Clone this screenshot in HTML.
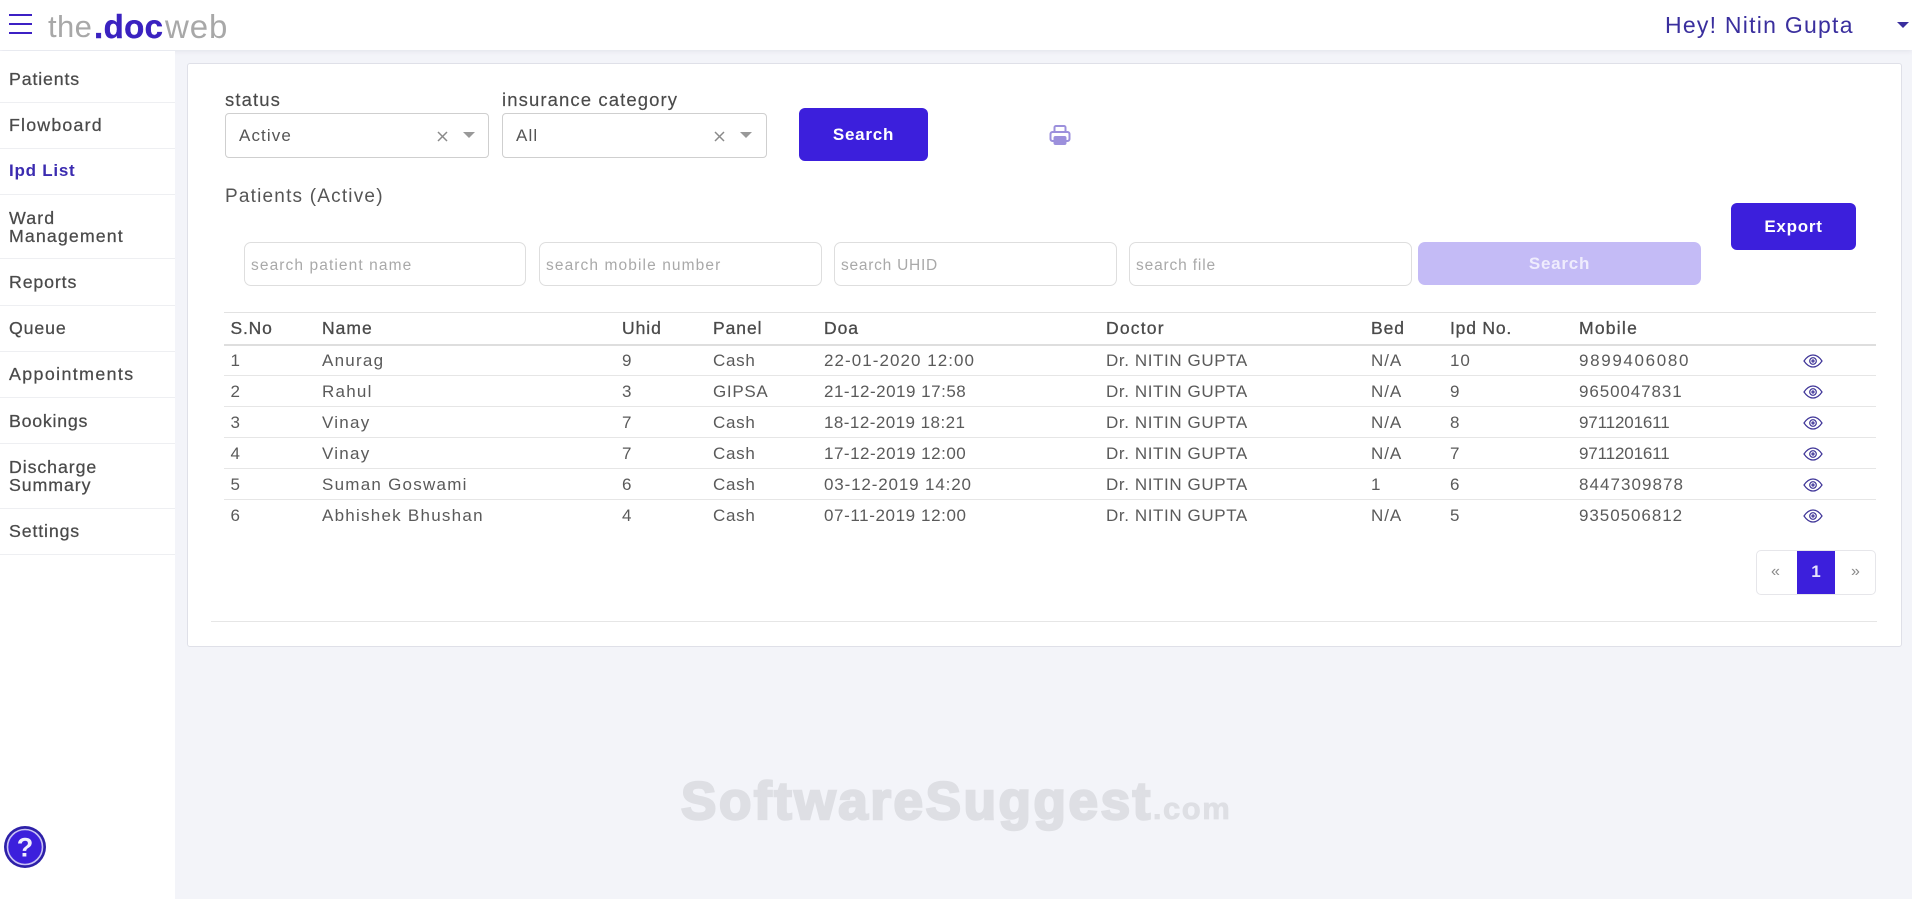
<!DOCTYPE html>
<html lang="en">
<head>
<meta charset="utf-8">
<title>the.docweb - Ipd List</title>
<style>
*{box-sizing:border-box}
html,body{margin:0;padding:0;width:1912px;height:899px;overflow:hidden;background:#f3f4f9;font-family:"Liberation Sans",sans-serif;color:#555}
.a{position:absolute;white-space:nowrap}
#top{left:0;top:0;width:1912px;height:50px;background:#fff;box-shadow:0 1px 5px rgba(60,60,90,.09)}
.ham{left:9px;height:2px;width:23px;background:#3c20c4}
#side{left:0;top:51px;width:175px;height:848px;background:#fff}
.nav{left:9px;font-size:17.800px;letter-spacing:.85px;line-height:18px;color:#4a4a4a;-webkit-text-stroke:.25px #4a4a4a}
.sep{left:0;width:175px;height:1px;background:#eeeff2}
#card{left:187px;top:63px;height:584px;width:1715px;background:#fff;border:1px solid #dfe0e8;border-radius:3px}
.lbl{font-size:18.500px;letter-spacing:1.1px;color:#4a4a4a;line-height:20px;-webkit-text-stroke:.15px #4a4a4a}
.sel{height:45px;top:113px;border:1px solid #cfcfcf;border-radius:4px;background:#fff}
.sel span{position:absolute;left:13px;top:12px;font-size:17px;letter-spacing:1.1px;line-height:20px;color:#555}
.inp{top:242px;height:44px;width:283px;border:1px solid #dedede;border-radius:7px;background:#fff;font-size:15.500px;letter-spacing:1.1px;line-height:45px;padding-left:6px;color:#a9a9a9}
.btn{background:#3c1fdc;color:#fff;font-weight:bold;font-size:17px;letter-spacing:.75px;text-align:center;border-radius:6px}
table{position:absolute;left:224px;top:312px;width:1652px;border-collapse:collapse;table-layout:fixed;font-size:17px;letter-spacing:.95px;color:#5a5a5a}
th,td{padding:0 0 0 6.5px;text-align:left;white-space:nowrap;overflow:visible}
th{height:32px;font-weight:normal;font-size:17.500px;padding-top:1px;color:#4a4a4a;-webkit-text-stroke:.3px #4a4a4a;border-top:1px solid #e2e2e2;border-bottom:2px solid #dedede}
td{height:31px;border-bottom:1px solid #e6e6e6;padding-top:1px}
tr:last-child td{border-bottom:none}
td svg{display:block;margin-left:-9px;margin-top:1px}
td.n{letter-spacing:1.25px}
td.p{letter-spacing:.7px}
td.o{letter-spacing:.6px}
.pg{left:1756px;top:550px;width:120px;height:45px;border:1px solid #e6e6ea;border-radius:5px;background:#fff}
</style>
</head>
<body>
<div class="a" id="top"></div>
<div class="a ham" style="top:14px"></div>
<div class="a ham" style="top:23px"></div>
<div class="a ham" style="top:31.500px"></div>
<div class="a" style="left:48px;top:9px;font-size:31px;line-height:36px;color:#a8a8a8;letter-spacing:.4px">the</div>
<div class="a" style="left:94px;top:9px;font-size:33px;line-height:36px;color:#3a22c0;font-weight:bold;letter-spacing:.4px;-webkit-text-stroke:.4px #3a22c0">.doc</div>
<div class="a" style="left:165px;top:9px;font-size:33px;line-height:36px;color:#a8a8a8;letter-spacing:.9px">web</div>
<div class="a" style="left:1665px;top:11px;font-size:23px;line-height:28px;color:#3a2f9e;letter-spacing:1.25px">Hey! Nitin Gupta</div>
<div class="a" style="left:1897px;top:22px;width:0;height:0;border-left:6px solid transparent;border-right:6px solid transparent;border-top:6px solid #3a2f9e"></div>

<div class="a" id="side"></div>
<div class="a nav" style="top:70px">Patients</div><div class="a sep" style="top:102px"></div>
<div class="a nav" style="top:116px;letter-spacing:1.2px">Flowboard</div><div class="a sep" style="top:148px"></div>
<div class="a nav" style="top:162px;color:#3b2bb0;font-weight:bold;font-size:17px;-webkit-text-stroke:0;letter-spacing:.75px">Ipd List</div><div class="a sep" style="top:194px"></div>
<div class="a nav" style="top:209px;letter-spacing:1.1px">Ward<br>Management</div><div class="a sep" style="top:258px"></div>
<div class="a nav" style="top:273px">Reports</div><div class="a sep" style="top:305px"></div>
<div class="a nav" style="top:319px">Queue</div><div class="a sep" style="top:351px"></div>
<div class="a nav" style="top:365px;letter-spacing:1.4px">Appointments</div><div class="a sep" style="top:397px"></div>
<div class="a nav" style="top:412px;letter-spacing:.75px">Bookings</div><div class="a sep" style="top:443px"></div>
<div class="a nav" style="top:458px;letter-spacing:.9px">Discharge<br>Summary</div><div class="a sep" style="top:508px"></div>
<div class="a nav" style="top:522px">Settings</div><div class="a sep" style="top:554px"></div>

<svg class="a" style="left:3px;top:825px" width="44" height="44" viewBox="0 0 44 44">
<circle cx="22" cy="22" r="21" fill="#2d20a8"/><circle cx="22" cy="22" r="17.5" fill="#3c1fdc" stroke="#c9c2f5" stroke-width="1.6"/>
<text x="22" y="31.500" text-anchor="middle" font-family="Liberation Sans" font-weight="bold" font-size="27" fill="#f0eefd">?</text></svg>

<div class="a" id="card"></div>
<div class="a lbl" style="left:225px;top:90px">status</div>
<div class="a lbl" style="left:502px;top:90px">insurance category</div>

<div class="a sel" style="left:225px;width:264px"><span>Active</span></div>
<svg class="a" style="left:436px;top:130px" width="13" height="13" viewBox="0 0 13 13"><path d="M2 2L11 11M11 2L2 11" stroke="#8a8a8a" stroke-width="1.5"/></svg>
<div class="a" style="left:463px;top:132px;border-left:6.5px solid transparent;border-right:6.5px solid transparent;border-top:6.5px solid #999"></div>

<div class="a sel" style="left:502px;width:265px"><span>All</span></div>
<svg class="a" style="left:713px;top:130px" width="13" height="13" viewBox="0 0 13 13"><path d="M2 2L11 11M11 2L2 11" stroke="#8a8a8a" stroke-width="1.5"/></svg>
<div class="a" style="left:740px;top:132px;border-left:6.5px solid transparent;border-right:6.5px solid transparent;border-top:6.5px solid #999"></div>

<div class="a btn" style="left:799px;top:108px;width:129px;height:53px;line-height:54px">Search</div>

<svg class="a" style="left:1049px;top:124px" width="22" height="22" viewBox="0 0 22 22" fill="none" stroke="#9c90dc" stroke-width="2">
<path d="M5.5 8V3.5a1.5 1.5 0 0 1 1.5-1.5h8a1.5 1.5 0 0 1 1.5 1.5V8"/>
<path d="M5.5 17H3.5a2 2 0 0 1-2-2v-5a2 2 0 0 1 2-2h15a2 2 0 0 1 2 2v5a2 2 0 0 1-2 2h-2"/>
<rect x="5.5" y="13" width="11" height="7" rx="1" fill="#9c90dc"/></svg>

<div class="a" style="left:225px;top:186px;font-size:19px;letter-spacing:1.2px;line-height:22px;color:#555">Patients (Active)</div>

<div class="a inp" style="left:244px;width:282px">search patient name</div>
<div class="a inp" style="left:539px">search mobile number</div>
<div class="a inp" style="left:834px;letter-spacing:.75px">search UHID</div>
<div class="a inp" style="left:1129px;letter-spacing:.85px">search file</div>
<div class="a btn" style="left:1418px;top:242px;width:283px;height:43px;line-height:43px;background:#c4bbf6;border-radius:7px;color:#efecfd">Search</div>
<div class="a btn" style="left:1731px;top:203px;width:125px;height:47px;line-height:48px">Export</div>

<table>
<colgroup><col style="width:91.5px"><col style="width:300px"><col style="width:91px"><col style="width:111px"><col style="width:282px"><col style="width:265px"><col style="width:79px"><col style="width:129px"><col style="width:233px"><col></colgroup>
<thead><tr><th style="letter-spacing:.8px">S.No</th><th style="letter-spacing:1px">Name</th><th>Uhid</th><th>Panel</th><th>Doa</th><th style="letter-spacing:1.2px">Doctor</th><th>Bed</th><th style="letter-spacing:.8px">Ipd No.</th><th style="letter-spacing:1.25px">Mobile</th><th></th></tr></thead>
<tbody>
<tr><td>1</td><td class="n">Anurag</td><td>9</td><td class="p">Cash</td><td style="letter-spacing:1.05px">22-01-2020 12:00</td><td class="o">Dr. NITIN GUPTA</td><td>N/A</td><td>10</td><td style="letter-spacing:1.65px">9899406080</td><td><svg width="20" height="14" viewBox="0 0 20 14" fill="none" stroke="#3f3598" stroke-width="1.2"><path d="M1 7C4 2.5 7 1 10 1s6 1.5 9 6c-3 4.5-6 6-9 6S4 11.500 1 7z"/><circle cx="10" cy="7" r="3.300"/><circle cx="10" cy="7" r="1"/></svg></td></tr>
<tr><td>2</td><td class="n">Rahul</td><td>3</td><td class="p">GIPSA</td><td style="letter-spacing:.5px">21-12-2019 17:58</td><td class="o">Dr. NITIN GUPTA</td><td>N/A</td><td>9</td><td style="letter-spacing:.9px">9650047831</td><td><svg width="20" height="14" viewBox="0 0 20 14" fill="none" stroke="#3f3598" stroke-width="1.2"><path d="M1 7C4 2.5 7 1 10 1s6 1.5 9 6c-3 4.5-6 6-9 6S4 11.500 1 7z"/><circle cx="10" cy="7" r="3.300"/><circle cx="10" cy="7" r="1"/></svg></td></tr>
<tr><td>3</td><td class="n">Vinay</td><td>7</td><td class="p">Cash</td><td style="letter-spacing:.45px">18-12-2019 18:21</td><td class="o">Dr. NITIN GUPTA</td><td>N/A</td><td>8</td><td style="letter-spacing:-.15px">9711201611</td><td><svg width="20" height="14" viewBox="0 0 20 14" fill="none" stroke="#3f3598" stroke-width="1.2"><path d="M1 7C4 2.5 7 1 10 1s6 1.5 9 6c-3 4.5-6 6-9 6S4 11.500 1 7z"/><circle cx="10" cy="7" r="3.300"/><circle cx="10" cy="7" r="1"/></svg></td></tr>
<tr><td>4</td><td class="n">Vinay</td><td>7</td><td class="p">Cash</td><td style="letter-spacing:.5px">17-12-2019 12:00</td><td class="o">Dr. NITIN GUPTA</td><td>N/A</td><td>7</td><td style="letter-spacing:-.15px">9711201611</td><td><svg width="20" height="14" viewBox="0 0 20 14" fill="none" stroke="#3f3598" stroke-width="1.2"><path d="M1 7C4 2.5 7 1 10 1s6 1.5 9 6c-3 4.5-6 6-9 6S4 11.500 1 7z"/><circle cx="10" cy="7" r="3.300"/><circle cx="10" cy="7" r="1"/></svg></td></tr>
<tr><td>5</td><td class="n">Suman Goswami</td><td>6</td><td class="p">Cash</td><td style="letter-spacing:.85px">03-12-2019 14:20</td><td class="o">Dr. NITIN GUPTA</td><td>1</td><td>6</td><td style="letter-spacing:1.05px">8447309878</td><td><svg width="20" height="14" viewBox="0 0 20 14" fill="none" stroke="#3f3598" stroke-width="1.2"><path d="M1 7C4 2.5 7 1 10 1s6 1.5 9 6c-3 4.5-6 6-9 6S4 11.500 1 7z"/><circle cx="10" cy="7" r="3.300"/><circle cx="10" cy="7" r="1"/></svg></td></tr>
<tr><td>6</td><td class="n">Abhishek Bhushan</td><td>4</td><td class="p">Cash</td><td style="letter-spacing:.6px">07-11-2019 12:00</td><td class="o">Dr. NITIN GUPTA</td><td>N/A</td><td>5</td><td style="letter-spacing:.95px">9350506812</td><td><svg width="20" height="14" viewBox="0 0 20 14" fill="none" stroke="#3f3598" stroke-width="1.2"><path d="M1 7C4 2.5 7 1 10 1s6 1.5 9 6c-3 4.5-6 6-9 6S4 11.500 1 7z"/><circle cx="10" cy="7" r="3.300"/><circle cx="10" cy="7" r="1"/></svg></td></tr>
</tbody>
</table>

<div class="a pg"></div>
<div class="a" style="left:1771px;top:562px;font-size:16px;line-height:20px;color:#8a8a8a">«</div>
<div class="a" style="left:1797px;top:551px;width:38px;height:43px;background:#3c1fdc;color:#e6e3fb;font-size:17px;font-weight:bold;text-align:center;line-height:42px">1</div>
<div class="a" style="left:1851px;top:562px;font-size:16px;line-height:20px;color:#8a8a8a">»</div>
<div class="a" style="left:211px;top:621px;width:1666px;height:1px;background:#e6e6e6"></div>

<div class="a" style="left:681px;top:771px;font-size:53px;line-height:62px;font-weight:bold;color:#dedfe4;letter-spacing:2.6px;-webkit-text-stroke:2.5px #dedfe4">SoftwareSuggest<span style="font-size:31px;letter-spacing:1.5px;-webkit-text-stroke:.8px #dedfe4">.com</span></div>
</body>
</html>
